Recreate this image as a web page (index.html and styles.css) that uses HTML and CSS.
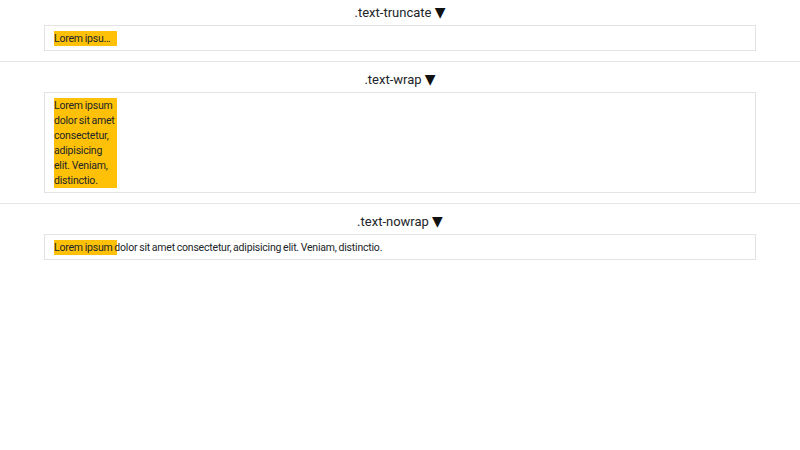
FILE: index.html
```html
<!DOCTYPE html>
<html lang="en">
  <head>
    <meta charset="UTF-8" />
    <meta name="viewport" content="width=device-width, initial-scale=1.0" />
    <title>Text utilities</title>
    <link rel="stylesheet" href="styles.css">
  </head>
  <body>
    <section class="demo">
      <h2 class="demo-title">.text-truncate <span class="caret">&#9660;</span></h2>
      <div class="demo-box">
        <div class="sample text-truncate">Lorem ipsum dolor sit amet consectetur, adipisicing elit. Veniam, distinctio.</div>
      </div>
    </section>

    <section class="demo">
      <h2 class="demo-title">.text-wrap <span class="caret">&#9660;</span></h2>
      <div class="demo-box">
        <div class="sample text-wrap">Lorem ipsum dolor sit amet consectetur, adipisicing elit. Veniam, distinctio.</div>
      </div>
    </section>

    <section class="demo">
      <h2 class="demo-title">.text-nowrap <span class="caret">&#9660;</span></h2>
      <div class="demo-box">
        <div class="sample text-nowrap">Lorem ipsum dolor sit amet consectetur, adipisicing elit. Veniam, distinctio.</div>
      </div>
    </section>
  </body>
</html>
```

FILE: styles.css
```css
* {
  box-sizing: border-box;
  margin: 0;
  padding: 0;
}

body {
  font-family: Roboto, "Open Sans", sans-serif;
  color: #212529;
  background: #fff;
}

.demo {
  padding: 8px 44px 10px;
  border-bottom: 1px solid #e6e6e6;
}

.demo:first-child {
  padding-top: 3px;
}

.demo:last-child {
  border-bottom: none;
}

.demo-title {
  font-size: 13px;
  font-weight: normal;
  line-height: 18px;
  height: 19px;
  padding-top: 1px;
  text-align: center;
  margin-bottom: 3px;
}

.caret {
  font-family: "DejaVu Sans", sans-serif;
  font-size: 14px;
  line-height: 1;
  color: #111;
}

.demo-box {
  border: 1px solid #e3e3e3;
  padding: 5px 9px 4px;
  font-size: 10.5px;
  line-height: 15px;
  letter-spacing: -0.2px;
  word-spacing: -0.6px;
}

.sample {
  width: 63px;
  background-color: #ffc107;
}

/* Utilities */
.text-truncate {
  overflow: hidden;
  text-overflow: ellipsis;
  white-space: nowrap;
}

.text-wrap {
  white-space: normal;
}

.text-nowrap {
  white-space: nowrap;
}
```
